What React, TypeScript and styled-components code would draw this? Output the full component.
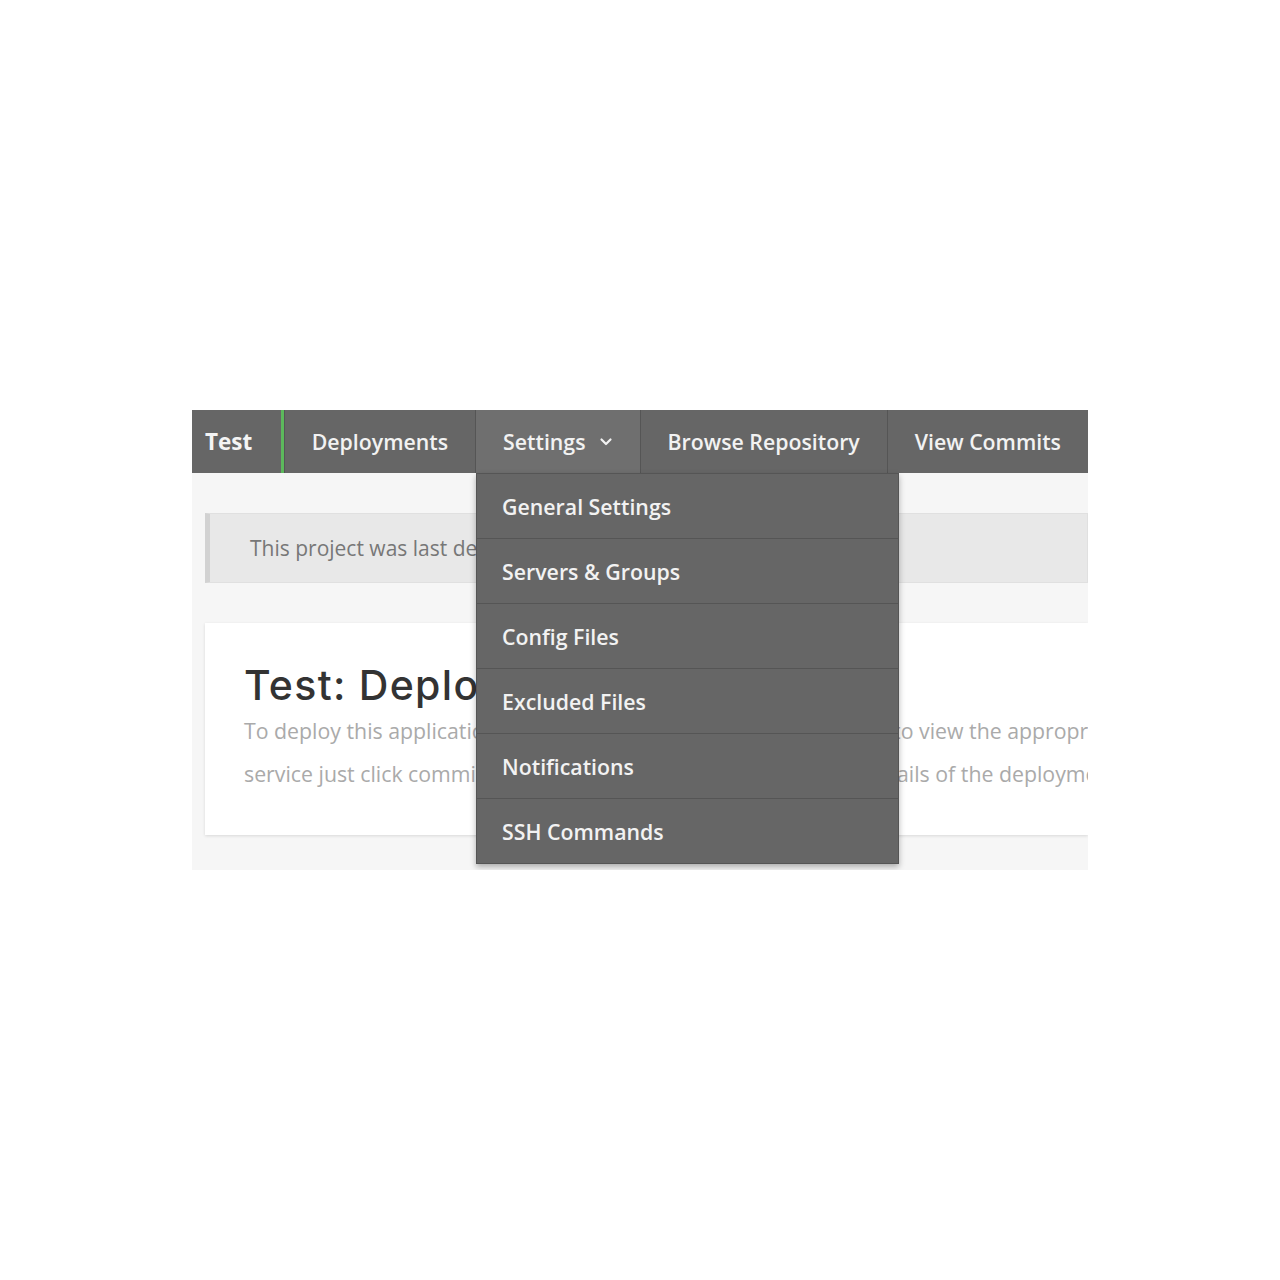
import React from 'react';
import styled, { createGlobalStyle } from 'styled-components';

const GlobalStyle = createGlobalStyle`
  html, body {
    margin: 0;
    padding: 0;
    background: #ffffff;
  }
  body {
    font-family: 'Open Sans', 'Liberation Sans', sans-serif;
  }
`;

const menuItems = [
  'General Settings',
  'Servers & Groups',
  'Config Files',
  'Excluded Files',
  'Notifications',
  'SSH Commands',
];

const Chevron = () => (
  <svg width="14" height="14" viewBox="0 0 14 14" fill="none">
    <path d="M2.5 4.5l4.5 4.5 4.5-4.5" stroke="#f2f2f2" strokeWidth="2.2" strokeLinecap="round" strokeLinejoin="round" />
  </svg>
);

const App = () => (
  <Page>
    <GlobalStyle />
    <Frame>
      <NavBar>
        <Brand>Test</Brand>
        <NavItem>Deployments</NavItem>
        <DropdownHolder>
          <NavItem $active>
            Settings
            <Chevron />
          </NavItem>
          <Menu>
            {menuItems.map((item) => (
              <MenuItem key={item}>{item}</MenuItem>
            ))}
          </Menu>
        </DropdownHolder>
        <NavItem>Browse Repository</NavItem>
        <NavItem $last>View Commits</NavItem>
      </NavBar>
      <Content>
        <Notice>This project was last deployed 3 days ago by the admin user.</Notice>
        <Card>
          <Title>Test: Deployments</Title>
          <Text>
            To deploy this application, then press Deploy. Click a deployment to view the appropriate logs for it.
            <br />
            service just click commits, then select a deployment to see the details of the deployment.
          </Text>
        </Card>
      </Content>
    </Frame>
  </Page>
);

const Page = styled.div`
  width: 1280px;
  height: 1280px;
  display: flex;
  align-items: center;
  justify-content: center;
`;

const Frame = styled.div`
  width: 896px;
  height: 460px;
  overflow: hidden;
  background: #f6f6f6;
  display: flex;
  flex-direction: column;
`;

const NavBar = styled.div`
  display: flex;
  height: 63px;
  background: #666666;
  flex-shrink: 0;
  position: relative;
  z-index: 2;
`;

const Brand = styled.div`
  width: 76px;
  padding: 0 3px 0 13px;
  display: flex;
  align-items: center;
  font-size: 22.5px;
  font-weight: 700;
  color: #f4f4f4;
  border-right: 1px solid #555555;
  box-shadow: inset -3px 0 0 #5cb85c;
`;

const NavItem = styled.div<{ $active?: boolean; $last?: boolean }>`
  height: 100%;
  display: flex;
  align-items: center;
  gap: 13px;
  padding: 0 27px 0 27px;
  box-sizing: border-box;
  font-size: 21.3px;
  font-weight: 600;
  color: #f2f2f2;
  white-space: nowrap;
  background: ${(p) => (p.$active ? '#6f6f6f' : '#666666')};
  border-right: ${(p) => (p.$last ? 'none' : '1px solid #555555')};
`;

const DropdownHolder = styled.div`
  position: relative;
  height: 100%;
`;

const Menu = styled.div`
  position: absolute;
  top: 100%;
  left: 0;
  width: 423px;
  box-sizing: border-box;
  background: #666666;
  border: 1px solid #555555;
  box-shadow: 0 3px 6px rgba(0, 0, 0, 0.3);
`;

const MenuItem = styled.div`
  height: 64px;
  display: flex;
  align-items: center;
  padding-left: 25px;
  font-size: 21.3px;
  font-weight: 600;
  color: #f2f2f2;
  border-top: 1px solid #555555;

  &:first-child {
    border-top: none;
  }
`;

const Content = styled.div`
  padding: 40px 0 0 13px;
  display: flex;
  flex-direction: column;
  gap: 40px;
`;

const Notice = styled.div`
  height: 70px;
  box-sizing: border-box;
  background: #e8e8e8;
  border: 1px solid #e0e0e0;
  border-left: 5px solid #d2d2d2;
  padding-left: 40px;
  display: flex;
  align-items: center;
  font-size: 21px;
  color: #777777;
  white-space: nowrap;
`;

const Card = styled.div`
  height: 212px;
  box-sizing: border-box;
  background: #ffffff;
  box-shadow: 0 1px 3px rgba(0, 0, 0, 0.12);
  padding: 38px 0 0 39px;
`;

const Title = styled.h1`
  margin: 0;
  font-family: Inter, 'Liberation Sans', sans-serif;
  font-size: 41px;
  font-weight: 500;
  letter-spacing: 1.3px;
  color: #333333;
  line-height: 48px;
  white-space: nowrap;
`;

const Text = styled.p`
  margin: 0;
  font-size: 21.3px;
  line-height: 43px;
  color: #aaaaaa;
  white-space: nowrap;
`;

export default App;
